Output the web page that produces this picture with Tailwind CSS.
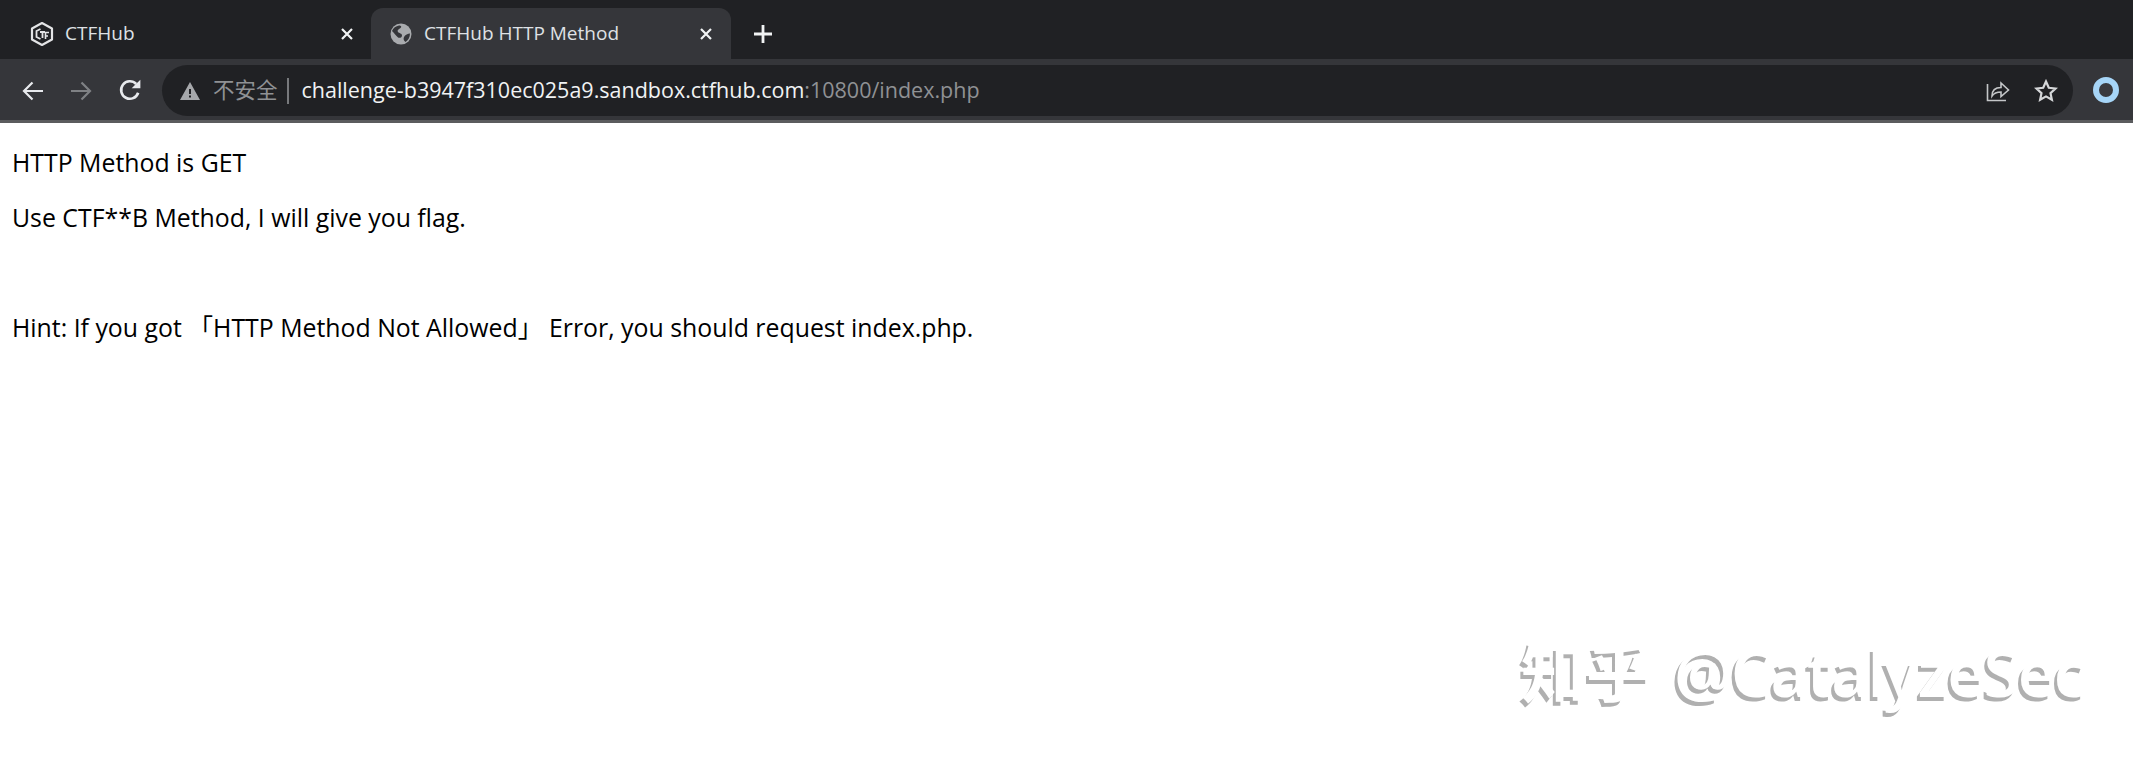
<!DOCTYPE html>
<html lang="zh">
<head>
    <meta charset="UTF-8">
    <title>CTFHub HTTP Method</title>
    <script src="https://cdn.jsdelivr.net/npm/@tailwindcss/browser@4"></script>
</head>
<body class="relative w-[2133px] h-[777px] overflow-hidden bg-white font-['Open_Sans','Noto_Sans_CJK_SC',sans-serif]">
    <!-- Tab strip -->
    <div class="flex h-[59px] items-end bg-[#202124] pl-[10px] text-[19px] text-[#dfe1e5]">
        <div class="flex h-[51px] w-[361px] items-center pl-[20px]">
            <svg class="w-[24px] h-[26px] shrink-0" viewBox="0 0 24 26" fill="none" stroke="#e3e4e6">
                <path d="M12 2l10 5.500v11L12 24 2 18.500v-11z" stroke-width="2.200" stroke-linejoin="round"/>
                <path d="M10.500 8L6.500 10v6l4 2" stroke-width="1.800"/>
                <path d="M10 11h5M12.500 11v6" stroke-width="1.800"/>
                <path d="M15.500 18v-6.500H19M15.500 15H18" stroke-width="1.600"/>
            </svg>
            <span class="ml-[11px]">CTFHub</span>
            <svg class="ml-auto mr-[17px] w-[14px] h-[14px]" viewBox="0 0 14 14" stroke="#f1f3f4" stroke-width="2.200">
                <path d="M2 2l10 10M12 2L2 12"/>
            </svg>
        </div>
        <div class="flex h-[51px] w-[360px] items-center rounded-t-[12px] bg-[#35363a] pl-[19px]">
            <svg class="w-[22px] h-[22px] shrink-0" viewBox="0 0 22 22">
                <circle cx="11" cy="11" r="10.500" fill="#a9abae"/>
                <path d="M2 8c1-3 4-5 7-5.500 2 0 3 1 1.500 2.500-2 1.500-3.500 2-2.500 4 1 1.500 4 1 4 3.500s-3 3-4.500 1.500S4 10 2 8zM14 14c1-2 4-3.500 6-3.500 0 4-2 7-4.500 8.500-1.500-1-2.500-3-1.500-5z" fill="#35363a"/>
            </svg>
            <span class="ml-[12px]">CTFHub HTTP Method</span>
            <svg class="ml-auto mr-[18px] w-[14px] h-[14px]" viewBox="0 0 14 14" stroke="#f1f3f4" stroke-width="2.200">
                <path d="M2 2l10 10M12 2L2 12"/>
            </svg>
        </div>
        <svg class="ml-[22px] mb-[15px] w-[20px] h-[20px]" viewBox="0 0 20 20" stroke="#f1f3f4" stroke-width="2.800">
            <path d="M10 1v18M1 10h18"/>
        </svg>
    </div>

    <!-- Toolbar -->
    <div class="flex h-[64px] items-start border-b-[3px] border-[#5b5c5e] bg-[#35363a] pt-[6px]">
        <div class="flex w-[162px] h-[51px] items-center pl-[22px] gap-[26px]">
            <svg class="w-[22px] h-[22px] shrink-0" viewBox="0 0 22 22" fill="none" stroke="#e8eaed" stroke-width="2.200">
                <path d="M21 11H2M10.500 2.500L2 11l8.500 8.500"/>
            </svg>
            <svg class="w-[22px] h-[22px] shrink-0" viewBox="0 0 22 22" fill="none" stroke="#7f8184" stroke-width="2.200">
                <path d="M1 11h19M11.500 2.500L20 11l-8.500 8.500"/>
            </svg>
            <svg class="w-[24px] h-[24px] shrink-0 -mt-[2px]" viewBox="0 0 22 22" fill="none" stroke="#e8eaed" stroke-width="2.400">
                <path d="M18.500 13.500a8 8 0 1 1-1.800-8"/>
                <path d="M20.500 1.500v8h-8z" fill="#e8eaed" stroke="none"/>
            </svg>
        </div>
        <div class="flex w-[1911px] h-[51px] items-center rounded-full bg-[#202124] pl-[18px] text-[21.5px]">
            <svg class="w-[20px] h-[18px] shrink-0" viewBox="0 0 20 18">
                <path fill-rule="evenodd" d="M10 0l10 18H0zM9 7v5h2V7zm0 6.500v2h2v-2z" fill="#a6a8ab"/>
            </svg>
            <span class="ml-[13px] text-[#8f9194]">不安全</span>
            <span class="ml-[9px] h-[26px] w-[2px] bg-[#77797c]"></span>
            <span class="ml-[13px] text-[#f1f3f4]">challenge-b3947f310ec025a9.sandbox.ctfhub.com<span class="text-[#8f9194]">:10800/index.php</span></span>
            <svg class="ml-auto w-[24px] h-[22px]" viewBox="0 0 24 22" fill="none" stroke="#c4c6c8" stroke-width="1.600">
                <path d="M1.500 4v16.500H20"/>
                <path d="M6 16c0-5 3-8.500 9-8.500V3l7.500 7-7.500 6.500v-4.500c-4 0-7 1-9 4z"/>
            </svg>
            <svg class="ml-[24px] mr-[15px] w-[24px] h-[24px]" viewBox="0 0 24 24" fill="none" stroke="#d5d7d9" stroke-width="2.200">
                <path d="M12 2.500l2.800 6.300 6.700.7-5 4.600 1.400 6.700-5.900-3.400-5.900 3.400 1.400-6.700-5-4.600 6.700-.7z"/>
            </svg>
        </div>
        <div class="ml-[20px] mt-[12px] w-[26px] h-[26px] rounded-full border-[6px] border-[#a6d5f7] bg-[#3a3a3e]"></div>
    </div>

    <!-- Page -->
    <div class="pl-[12px] pt-[22px] text-[24.85px] leading-[34px] text-black">
        <p>HTTP Method is GET</p>
        <p class="mt-[21px]">Use CTF**B Method, I will give you flag.</p>
        <p class="mt-[76px]">Hint: If you got 「HTTP Method Not Allowed」 Error, you should request index.php.</p>
    </div>

    <!-- Watermark -->
    <div class="absolute left-[1521px] top-[636px] text-[65px] leading-[72px] font-semibold [word-spacing:6px] whitespace-nowrap text-white [text-shadow:-3px_4px_0_#b0b0b0]"><span class="font-bold">知乎</span> <span class="tracking-[-1.400px]">@CatalyzeSec</span></div>
</body>
</html>
